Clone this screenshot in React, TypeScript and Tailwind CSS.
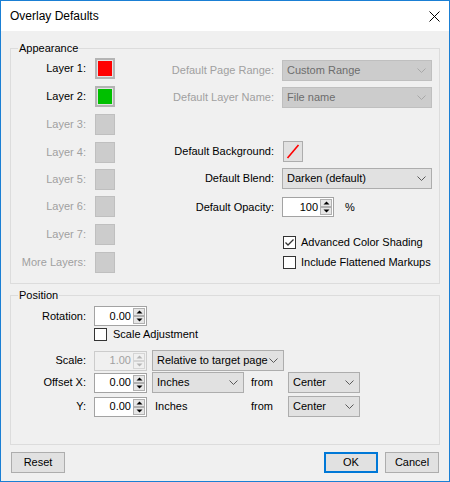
import React from "react";

function Chevron({ disabled }: { disabled?: boolean }) {
  return (
    <svg width="9" height="5" viewBox="0 0 9 5" className="shrink-0">
      <polyline points="0.5,0.5 4.5,4.5 8.5,0.5" fill="none" stroke={disabled ? "#a8a8a8" : "#5a5a5a"} strokeWidth="1" />
    </svg>
  );
}

function Combo({ text, w, disabled }: { text: string; w: string; disabled?: boolean }) {
  return (
    <div
      className={
        "h-[21px] flex items-center justify-between pl-[4px] pr-[5px] border " +
        w +
        (disabled ? " bg-[#cccccc] border-[#bfbfbf] text-[#6d6d6d]" : " bg-[#e1e1e1] border-[#adadad] text-black")
      }
    >
      <span className="whitespace-nowrap leading-none">{text}</span>
      <Chevron disabled={disabled} />
    </div>
  );
}

function Tri({ up, disabled }: { up?: boolean; disabled?: boolean }) {
  return (
    <svg width="7" height="4" viewBox="0 0 7 4">
      <polygon points={up ? "0.5,3.5 3.5,0.5 6.5,3.5" : "0.5,0.5 3.5,3.5 6.5,0.5"} fill={disabled ? "#b5b5b5" : "#000"} />
    </svg>
  );
}

function Spin({ value, w, disabled }: { value: string; w: string; disabled?: boolean }) {
  return (
    <div
      className={
        "h-[20px] flex items-center border " +
        w +
        (disabled ? " bg-[#f0f0f0] border-[#cccccc] text-[#a0a0a0]" : " bg-white border-[#a3a3a3] text-black")
      }
    >
      <span className="flex-1 text-right pr-[2px] leading-none">{value}</span>
      <div className="flex flex-col gap-[0px] mr-[1px]">
        <div className={"w-[12px] h-[8px] border flex items-center justify-center " + (disabled ? "border-[#d5d5d5] bg-[#f0f0f0]" : "border-[#b0b0b0] bg-[#e6e6e6]")}>
          <Tri up disabled={disabled} />
        </div>
        <div className={"w-[12px] h-[8px] border flex items-center justify-center " + (disabled ? "border-[#d5d5d5] bg-[#f0f0f0]" : "border-[#b0b0b0] bg-[#e6e6e6]")}>
          <Tri disabled={disabled} />
        </div>
      </div>
    </div>
  );
}

function Checkbox({ checked }: { checked?: boolean }) {
  return (
    <div className="w-[13px] h-[13px] border border-[#333333] bg-white flex items-center justify-center shrink-0">
      {checked && (
        <svg width="11" height="11" viewBox="0 0 11 11">
          <polyline points="1.5,5.5 4,8 9.5,2.5" fill="none" stroke="#333333" strokeWidth="1.3" />
        </svg>
      )}
    </div>
  );
}

function Swatch({ color }: { color?: string }) {
  if (!color) return <div className="w-[20px] h-[21px] border border-[#bfbfbf] bg-[#cccccc] shrink-0" />;
  return (
    <div className="w-[20px] h-[21px] border-2 border-[#b4b4b4] bg-[#e3e3e3] p-[1px] shrink-0">
      <div className="w-full h-full" style={{ backgroundColor: color }} />
    </div>
  );
}

function Button({ label, primary, w }: { label: string; primary?: boolean; w: string }) {
  return (
    <div
      className={
        "h-[21px] flex items-center justify-center bg-[#e1e1e1] " +
        w +
        (primary ? " border-2 border-[#0078d7]" : " border border-[#adadad]")
      }
    >
      {label}
    </div>
  );
}

const layers = [
  { label: "Layer 1:", color: "#ff0000", mt: "mt-0" },
  { label: "Layer 2:", color: "#00c000", mt: "mt-[7px]" },
  { label: "Layer 3:", mt: "mt-[7px]" },
  { label: "Layer 4:", mt: "mt-[7px]" },
  { label: "Layer 5:", mt: "mt-[6px]" },
  { label: "Layer 6:", mt: "mt-[6px]" },
  { label: "Layer 7:", mt: "mt-[7px]" },
  { label: "More Layers:", mt: "mt-[7px]" },
];

export default function App() {
  return (
    <div className="w-[450px] h-[482px] border border-[#1a7fd4] bg-[#f0f0f0] flex flex-col text-[11px] text-black font-['Liberation_Sans',Arial,sans-serif]">
      {/* Title bar */}
      <div className="h-[30px] bg-white flex items-center justify-between pl-[9px] pr-[9px] shrink-0">
        <span className="text-[12px]">Overlay Defaults</span>
        <svg width="11" height="11" viewBox="0 0 11 11">
          <line x1="0.5" y1="0.5" x2="10.5" y2="10.5" stroke="#000" strokeWidth="1" />
          <line x1="10.5" y1="0.5" x2="0.5" y2="10.5" stroke="#000" strokeWidth="1" />
        </svg>
      </div>

      <div className="flex flex-col px-[9px]">
        {/* Appearance */}
        <div className="relative mt-[17px] h-[236px] border border-[#dcdcdc] flex">
          <span className="absolute left-[7px] -top-[7px] px-[1px] bg-[#f0f0f0] leading-[13px]">Appearance</span>
          {/* left column */}
          <div className="w-[104px] pt-[9px] flex flex-col shrink-0">
            {layers.map((l) => (
              <div key={l.label} className={"flex items-center h-[21px] " + l.mt}>
                <span className={"w-[75px] text-right whitespace-nowrap " + (l.color ? "text-black" : "text-[#a0a0a0]")}>{l.label}</span>
                <div className="ml-[9px]">
                  <Swatch color={l.color} />
                </div>
              </div>
            ))}
          </div>
          {/* right column */}
          <div className="flex flex-col pt-[11px]">
            <div className="flex items-center h-[21px]">
              <span className="w-[159px] text-right text-[#a0a0a0]">Default Page Range:</span>
              <div className="ml-[8px]">
                <Combo text="Custom Range" w="w-[150px]" disabled />
              </div>
            </div>
            <div className="flex items-center h-[21px] mt-[6px]">
              <span className="w-[159px] text-right text-[#a0a0a0]">Default Layer Name:</span>
              <div className="ml-[8px]">
                <Combo text="File name" w="w-[150px]" disabled />
              </div>
            </div>
            <div className="flex items-center h-[21px] mt-[33px]">
              <span className="w-[159px] text-right">Default Background:</span>
              <div className="ml-[9px] w-[20px] h-[21px] border border-[#adadad] bg-[#e1e1e1] flex items-center justify-center">
                <svg width="14" height="15" viewBox="0 0 14 15">
                  <line x1="1.5" y1="14" x2="12.5" y2="1" stroke="#ff0000" strokeWidth="1.6" />
                </svg>
              </div>
            </div>
            <div className="flex items-center h-[21px] mt-[6px]">
              <span className="w-[159px] text-right">Default Blend:</span>
              <div className="ml-[8px]">
                <Combo text="Darken (default)" w="w-[150px]" />
              </div>
            </div>
            <div className="flex items-center h-[20px] mt-[8px]">
              <span className="w-[159px] text-right">Default Opacity:</span>
              <div className="ml-[8px]">
                <Spin value="100" w="w-[52px]" />
              </div>
              <span className="ml-[11px]">%</span>
            </div>
            <div className="flex items-center h-[13px] mt-[19px] ml-[168px]">
              <Checkbox checked />
              <span className="ml-[5px] whitespace-nowrap">Advanced Color Shading</span>
            </div>
            <div className="flex items-center h-[13px] mt-[7px] ml-[168px]">
              <Checkbox />
              <span className="ml-[5px] whitespace-nowrap">Include Flattened Markups</span>
            </div>
          </div>
        </div>

        {/* Position */}
        <div className="relative mt-[11px] h-[150px] border border-[#dcdcdc] flex flex-col pt-[10px]">
          <span className="absolute left-[7px] -top-[7px] px-[1px] bg-[#f0f0f0] leading-[13px]">Position</span>
          <div className="flex items-center h-[20px]">
            <span className="w-[75px] text-right">Rotation:</span>
            <div className="ml-[8px]">
              <Spin value="0.00" w="w-[53px]" />
            </div>
          </div>
          <div className="flex items-center h-[13px] mt-[2px] ml-[83px]">
            <Checkbox />
            <span className="ml-[6px] whitespace-nowrap">Scale Adjustment</span>
          </div>
          <div className="flex items-center h-[21px] mt-[9px]">
            <span className="w-[75px] text-right">Scale:</span>
            <div className="ml-[8px]">
              <Spin value="1.00" w="w-[53px]" disabled />
            </div>
            <div className="ml-[5px]">
              <Combo text="Relative to target page" w="w-[132px]" />
            </div>
          </div>
          <div className="flex items-center h-[21px] mt-[1px]">
            <span className="w-[75px] text-right">Offset X:</span>
            <div className="ml-[8px]">
              <Spin value="0.00" w="w-[53px]" />
            </div>
            <div className="ml-[5px]">
              <Combo text="Inches" w="w-[92px]" />
            </div>
            <span className="ml-[7px] w-[37px]">from</span>
            <Combo text="Center" w="w-[72px]" />
          </div>
          <div className="flex items-center h-[21px] mt-[3px]">
            <span className="w-[75px] text-right">Y:</span>
            <div className="ml-[8px]">
              <Spin value="0.00" w="w-[53px]" />
            </div>
            <span className="ml-[8px] w-[89px]">Inches</span>
            <span className="ml-[7px] w-[37px]">from</span>
            <Combo text="Center" w="w-[72px]" />
          </div>
        </div>

        {/* Buttons */}
        <div className="flex items-center mt-[7px] px-[1px]">
          <Button label="Reset" w="w-[54px]" />
          <div className="flex-1" />
          <Button label="OK" w="w-[54px]" primary />
          <div className="ml-[7px]">
            <Button label="Cancel" w="w-[54px]" />
          </div>
        </div>
      </div>
    </div>
  );
}
